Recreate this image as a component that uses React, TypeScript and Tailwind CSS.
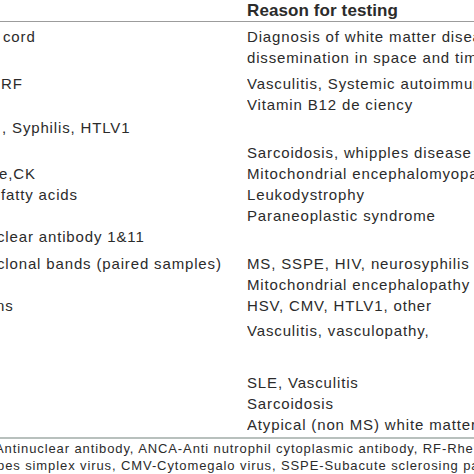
type Group = { mt: string; left: string[]; leftShift?: string[]; right: string[] };

const groups: Group[] = [
  { mt: "mt-[2px]", left: ["cord"], leftShift: ["ml-[3px]"], right: ["Diagnosis of white matter disease,", "dissemination in space and time"] },
  { mt: "mt-[5px]", left: ["RF"], leftShift: ["ml-[1px]"], right: ["Vasculitis, Systemic autoimmune", "Vitamin B12 de ciency"] },
  { mt: "mt-[2px]", left: [", Syphilis, HTLV1"], leftShift: ["ml-[2px]"], right: [] },
  { mt: "mt-[4px]", left: [], right: ["Sarcoidosis, whipples disease"] },
  { mt: "mt-0", left: ["e,CK", "fatty acids"], leftShift: ["ml-[-1px]", "ml-[1px]"], right: ["Mitochondrial encephalomyopathy", "Leukodystrophy", "Paraneoplastic syndrome"] },
  { mt: "mt-0", left: ["clear antibody 1&11"], leftShift: ["ml-[-3px]"], right: [] },
  { mt: "mt-[6px]", left: ["clonal bands (paired samples)", "", "ns"], leftShift: ["ml-[-3px]", "", "ml-[-4px]"], right: ["MS, SSPE, HIV, neurosyphilis", "Mitochondrial encephalopathy", "HSV, CMV, HTLV1, other"] },
  { mt: "mt-[4px]", left: [], right: ["Vasculitis, vasculopathy,"] },
  { mt: "mt-[31px]", left: [], right: ["SLE, Vasculitis", "Sarcoidosis", "Atypical (non MS) white matter disease"] },
];

export default function App() {
  return (
    <div
      className="w-[474px] h-[474px] overflow-hidden bg-white text-[#2b2b2b]"
      style={{ fontFamily: '"Liberation Sans", Arial, sans-serif' }}
    >
      {/* header */}
      <div className="grid grid-cols-[247px_1fr] h-[22px] border-b border-[#9c9c9c]">
        <div />
        <div className="text-[17px] font-bold leading-[21px] tracking-[0.1px] whitespace-nowrap">Reason for testing</div>
      </div>

      {/* body rows */}
      <div className="pt-[2px]">
        {groups.map((g, i) => (
          <div key={i} className={`grid grid-cols-[247px_1fr] ${g.mt}`}>
            <div className="overflow-hidden text-[15px] leading-[21px] tracking-[0.85px] whitespace-nowrap">
              {g.left.map((t, j) => (
                <div key={j} className={`h-[21px] ${g.leftShift?.[j] ?? ""}`}>{t}</div>
              ))}
            </div>
            <div className="overflow-hidden text-[15px] leading-[21px] tracking-[0.85px] whitespace-nowrap">
              {g.right.map((t, j) => (
                <div key={j} className="h-[21px]">{t}</div>
              ))}
            </div>
          </div>
        ))}
      </div>

      {/* footer */}
      <div className="mt-[2px] border-t-2 border-[#b8c0bd] pt-[1px] text-[13px] leading-[17px] tracking-[0.9px] whitespace-nowrap overflow-hidden">
        <div className="ml-[-5px]">Antinuclear antibody, ANCA-Anti nutrophil cytoplasmic antibody, RF-Rheumatoid factor</div>
        <div className="ml-[-3px]">pes simplex virus, CMV-Cytomegalo virus, SSPE-Subacute sclerosing panencephalitis</div>
      </div>
    </div>
  );
}
